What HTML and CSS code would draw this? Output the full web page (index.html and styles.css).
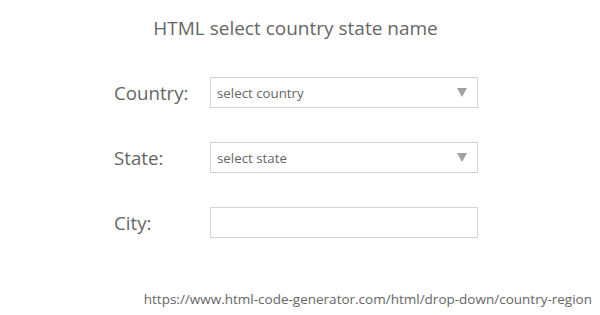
FILE: index.html
```html
<!DOCTYPE html>
<html lang="en">
<head>
<meta charset="UTF-8">
<title>HTML select country state name</title>
<link rel="stylesheet" href="styles.css">
</head>
<body>
<h1 class="title">HTML select country state name</h1>
<form class="location">
    <label class="label" for="country">Country:</label>
    <div class="pick">
        <select id="country"><option>select country</option></select>
    </div>

    <label class="label" for="state">State:</label>
    <div class="pick">
        <select id="state"><option>select state</option></select>
    </div>

    <label class="label" for="city">City:</label>
    <input class="field" id="city" type="text">
</form>
<p class="source">https://www.html-code-generator.com/html/drop-down/country-region</p>
</body>
</html>
```

FILE: styles.css
```css
body{margin:8px;color:#666;font-family:"Open Sans","Noto Sans",sans-serif;background:#fff;}
.title{margin:7px 0 0;padding-right:9px;font-size:19px;font-weight:normal;line-height:26px;text-align:center;color:#666;}
.location{display:grid;grid-template-columns:96px 268px;grid-auto-rows:31px;row-gap:34px;align-items:center;margin:36px 0 0 106px;}
.label{font-size:18.7px;color:#666;}
.pick{position:relative;height:31px;}
.pick select{width:100%;height:31px;margin:0;padding:0 6px;border:1px solid #d4d4d4;border-radius:0;background:#fff;color:#666;font:13.3px "Open Sans","Noto Sans",sans-serif;appearance:none;-webkit-appearance:none;outline:none;}
.pick::after{content:"";position:absolute;right:11px;top:11px;width:0;height:0;border-left:5px solid transparent;border-right:5px solid transparent;border-top:9px solid #a0a0a0;pointer-events:none;}
.field{box-sizing:border-box;width:100%;height:31px;margin:0;border:1px solid #d4d4d4;padding:0 6px;}
.source{margin:52px 0 0;font-size:13.5px;text-align:right;color:#666;}
```
